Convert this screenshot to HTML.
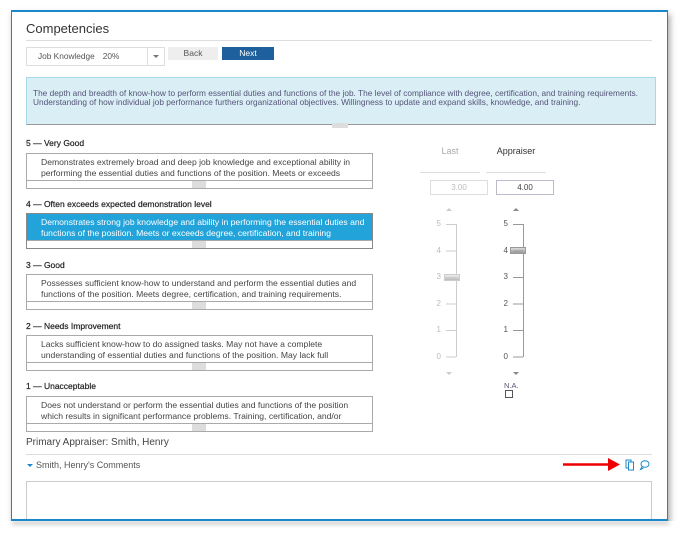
<!DOCTYPE html><html><head><style>
body{margin:0;width:678px;height:533px;background:#fff;font-family:"Liberation Sans",sans-serif;position:relative;overflow:hidden}
.a{position:absolute}
.frame{left:11px;top:10px;width:655px;height:510px;border:1px solid #1a87c9;border-top-width:2px;box-shadow:2px 4px 6px rgba(0,0,0,.35);background:#fff}
.lbl{font-size:8.5px;color:#222;-webkit-text-stroke:0.2px #222}
.box{left:26px;width:345px;height:34px;border:1px solid #aaa;background:#fff;font-size:8.6px;color:#444;line-height:11px}
.box .t{padding:3px 4px 0 14px;height:23px;overflow:hidden}
.box .sb{position:absolute;left:0;right:0;bottom:0;height:7px;border-top:1px solid #aaa;background:#fff}
.box .sb i{position:absolute;left:165px;width:14px;height:7px;background:#ddd}
.sel{background:#22a3da;color:#fff;border-color:#888}
</style></head><body>
<div class="a frame"></div>
<div class="a" style="left:26px;top:21px;font-size:13px;color:#333">Competencies</div>
<div class="a" style="left:26px;top:40px;width:626px;height:1px;background:#ddd"></div>
<div class="a" style="left:26px;top:47px;width:137px;height:17px;border:1px solid #ddd;font-size:8.3px;color:#555;line-height:17px"><span style="margin-left:11px">Job Knowledge</span><span style="margin-left:8px">20%</span><span style="position:absolute;left:120px;top:0;width:1px;height:17px;background:#ddd"></span><span style="position:absolute;left:126px;top:7px;border:3px solid transparent;border-top:3px solid #777"></span></div>
<div class="a" style="left:168px;top:47px;width:50px;height:13px;background:#eee;font-size:8.5px;color:#555;text-align:center;line-height:13px">Back</div>
<div class="a" style="left:222px;top:47px;width:52px;height:13px;background:#1e5f9e;font-size:8.5px;color:#fff;text-align:center;line-height:13px">Next</div>
<div class="a" style="left:26px;top:77px;width:628px;height:46px;background:#daeef6;border:1px solid #a9d8ea;border-bottom:1px solid #999;font-size:8.3px;color:#557;line-height:9px"><div style="padding:11px 6px 0 6px">The depth and breadth of know-how to perform essential duties and functions of the job. The level of compliance with degree, certification, and training requirements. Understanding of how individual job performance furthers organizational objectives. Willingness to update and expand skills, knowledge, and training.</div></div>
<div class="a" style="left:332px;top:123px;width:16px;height:5px;background:#ddd"></div>

<div class="a lbl" style="left:26px;top:138px">5 — Very Good</div>
<div class="a box" style="top:153px"><div class="t">Demonstrates extremely broad and deep job knowledge and exceptional ability in performing the essential duties and functions of the position. Meets or exceeds degree,</div><div class="sb"><i></i></div></div>
<div class="a lbl" style="left:26px;top:199px">4 — Often exceeds expected demonstration level</div>
<div class="a box sel" style="top:213px"><div class="t">Demonstrates strong job knowledge and ability in performing the essential duties and functions of the position. Meets or exceeds degree, certification, and training</div><div class="sb"><i></i></div></div>
<div class="a lbl" style="left:26px;top:260px">3 — Good</div>
<div class="a box" style="top:274px"><div class="t">Possesses sufficient know-how to understand and perform the essential duties and functions of the position. Meets degree, certification, and training requirements.</div><div class="sb"><i></i></div></div>
<div class="a lbl" style="left:26px;top:321px">2 — Needs Improvement</div>
<div class="a box" style="top:335px"><div class="t">Lacks sufficient know-how to do assigned tasks. May not have a complete understanding of essential duties and functions of the position. May lack full awareness</div><div class="sb"><i></i></div></div>
<div class="a lbl" style="left:26px;top:381px">1 — Unacceptable</div>
<div class="a box" style="top:396px"><div class="t">Does not understand or perform the essential duties and functions of the position which results in significant performance problems. Training, certification, and/or degree</div><div class="sb"><i></i></div></div>

<div class="a" style="left:420px;top:146px;width:60px;text-align:center;font-size:9px;color:#aaa">Last</div>
<div class="a" style="left:486px;top:146px;width:60px;text-align:center;font-size:9px;color:#333">Appraiser</div>
<div class="a" style="left:420px;top:172px;width:60px;height:1px;background:#ddd"></div>
<div class="a" style="left:486px;top:172px;width:60px;height:1px;background:#ddd"></div>
<div class="a" style="left:430px;top:180px;width:56px;height:13px;border:1px solid #ddd;font-size:8px;color:#bbb;text-align:center;line-height:13px">3.00</div>
<div class="a" style="left:496px;top:180px;width:56px;height:13px;border:1px solid #bbc;font-size:8px;color:#444;text-align:center;line-height:13px">4.00</div>
<div class="a" style="left:446px;top:205px;border:3px solid transparent;border-bottom:3px solid #ccc"></div>
<div class="a" style="left:513px;top:205px;border:3px solid transparent;border-bottom:3px solid #888"></div>
<div class="a" style="left:446px;top:372px;border:3px solid transparent;border-top:3px solid #ccc"></div>
<div class="a" style="left:513px;top:372px;border:3px solid transparent;border-top:3px solid #888"></div>
<div class="a" style="left:456px;top:224px;width:1px;height:133px;background:#ccc"></div>
<div class="a" style="left:523px;top:224px;width:1px;height:133px;background:#999"></div>
<div class="a" style="left:444px;top:274px;width:14px;height:5px;background:linear-gradient(#eee,#bbb);border:1px solid #ccc"></div>
<div class="a" style="left:510px;top:247px;width:14px;height:5px;background:linear-gradient(#ddd,#999);border:1px solid #999"></div>
<div class="a" style="left:429px;top:211px;font-size:8px;color:#bbb;line-height:26.6px;text-align:right;width:12px">5<br>4<br>3<br>2<br>1<br>0</div>
<div class="a" style="left:496px;top:211px;font-size:8px;color:#555;line-height:26.6px;text-align:right;width:12px">5<br>4<br>3<br>2<br>1<br>0</div>
<svg class="a" style="left:440px;top:220px" width="100" height="140"><g stroke="#ccc"><path d="M6 4.5h10M6 31h10M6 57.5h10M6 84h10M6 110.5h10M6 137h10"/></g><g stroke="#999"><path d="M73 4.5h10M73 31h10M73 57.5h10M73 84h10M73 110.5h10M73 137h10"/></g></svg>
<div class="a" style="left:504px;top:381px;font-size:7.5px;color:#557">N.A.</div>
<div class="a" style="left:505px;top:390px;width:6px;height:6px;border:1px solid #555"></div>

<div class="a" style="left:26px;top:437px;font-size:10px;color:#444">Primary Appraiser: Smith, Henry</div>
<div class="a" style="left:26px;top:454px;width:626px;height:1px;background:#ddd"></div>
<div class="a" style="left:27px;top:464px;border:3px solid transparent;border-top:3px solid #1a87c9"></div>
<div class="a" style="left:36px;top:460px;font-size:9px;color:#555">Smith, Henry's Comments</div>
<svg class="a" style="left:560px;top:456px" width="95" height="18"><path d="M3 8.5h50" stroke="#e00" stroke-width="2.5"/><path d="M48 2l12 6.5-12 6.5z" fill="#e00"/><rect x="66" y="4" width="5" height="8" fill="none" stroke="#1a87c9"/><rect x="68.5" y="6" width="5" height="8" fill="#fff" stroke="#1a87c9"/><ellipse cx="85" cy="8" rx="4" ry="3.3" fill="none" stroke="#1a87c9"/><path d="M82 10.5l-1.5 3 3-1.5" fill="none" stroke="#1a87c9"/></svg>
<div class="a" style="left:26px;top:481px;width:624px;height:45px;border:1px solid #ccc"></div>
<div class="a" style="left:0;top:521px;width:678px;height:12px;background:#fff"></div>
<div class="a" style="left:11px;top:519px;width:657px;height:2px;background:#1a87c9;box-shadow:1px 3px 4px rgba(0,0,0,.35)"></div>
</body></html>
